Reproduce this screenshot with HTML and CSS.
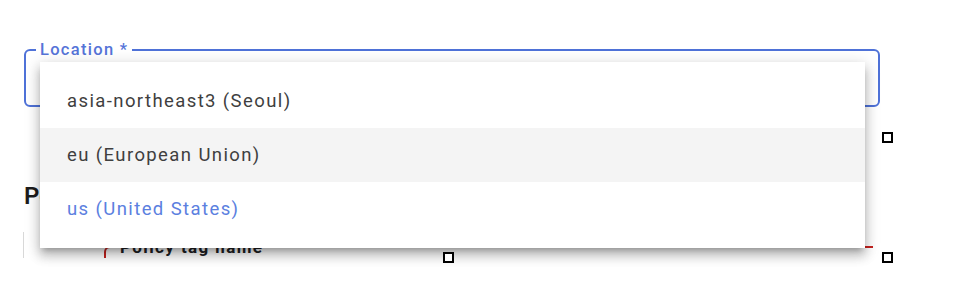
FILE: index.html
```html
<!DOCTYPE html>
<html>
<head>
<meta charset="utf-8">
<link rel="stylesheet" href="styles.css">
</head>
<body>
<div class="page">
  <fieldset class="field">
    <legend class="field-label">Location *</legend>
    <div class="field-body"></div>
  </fieldset>
  <h2 class="section-title">Policy tags</h2>
  <div class="tag-box">
    <fieldset class="field field-error">
      <legend class="field-label error-label">Policy tag name</legend>
      <div class="field-body"></div>
    </fieldset>
  </div>
</div>
<ul class="menu">
  <li class="menu-item">asia-northeast3 (Seoul)</li>
  <li class="menu-item active">eu (European Union)</li>
  <li class="menu-item selected">us (United States)</li>
</ul>
<span class="handle h-right-mid"></span>
<span class="handle h-bottom-mid"></span>
<span class="handle h-bottom-right"></span>
</body>
</html>
```
FILE: styles.css
```css
html, body {
  margin: 0;
  padding: 0;
  background: #ffffff;
  font-family: Roboto, "Noto Sans", "Liberation Sans", sans-serif;
}
body {
  position: relative;
  width: 960px;
  height: 296px;
  overflow: hidden;
}
.page {
  box-sizing: border-box;
  height: 258px;
  overflow: hidden;
  padding: 41px 80px 0 24px;
}
.field {
  margin: 0;
  width: 856px;
  box-sizing: border-box;
  padding: 0 0 0 10px;
  border: 2px solid #4f72d8;
  border-radius: 6px;
}
.field-label {
  padding: 0 4px;
  font-size: 16.5px;
  line-height: 18px;
  font-weight: 500;
  letter-spacing: 1.3px;
  color: #5574d8;
}
.field-body {
  height: 46px;
}
.section-title {
  margin: 77px 0 0 0;
  font-size: 24px;
  line-height: 24px;
  font-weight: 600;
  color: #1c1c1c;
}
.tag-box {
  margin: 24px 0 0 -1px;
  border-left: 1px solid #d8d8d8;
  padding: 6px 0 0 80px;
  height: 60px;
}
.field-error {
  width: 769px;
  border-color: #c5221f;
  border-right: none;
  border-top-right-radius: 0;
}
.error-label {
  color: #202124;
  font-weight: 700;
  font-size: 17px;
  letter-spacing: 1.4px;
}
.menu {
  position: absolute;
  left: 40px;
  top: 62px;
  width: 825px;
  margin: 0;
  padding: 12px 0;
  list-style: none;
  background: #ffffff;
  box-shadow: 0 5px 6px -3px rgba(0,0,0,.25), 0 8px 10px 1px rgba(0,0,0,.16), 0 3px 14px 2px rgba(0,0,0,.13);
}
.menu-item {
  height: 54px;
  line-height: 54px;
  padding-left: 27px;
  font-size: 18.5px;
  letter-spacing: 1.4px;
  color: #3f3f3f;
}
.menu-item.active {
  background: #f4f4f4;
}
.menu-item.selected {
  color: #5b80e0;
}
.handle {
  position: absolute;
  width: 7px;
  height: 7px;
  border: 2px solid #000;
  background: #fff;
}
.h-right-mid { left: 882px; top: 132px; }
.h-bottom-mid { left: 443px; top: 252px; }
.h-bottom-right { left: 882px; top: 252px; }
```
